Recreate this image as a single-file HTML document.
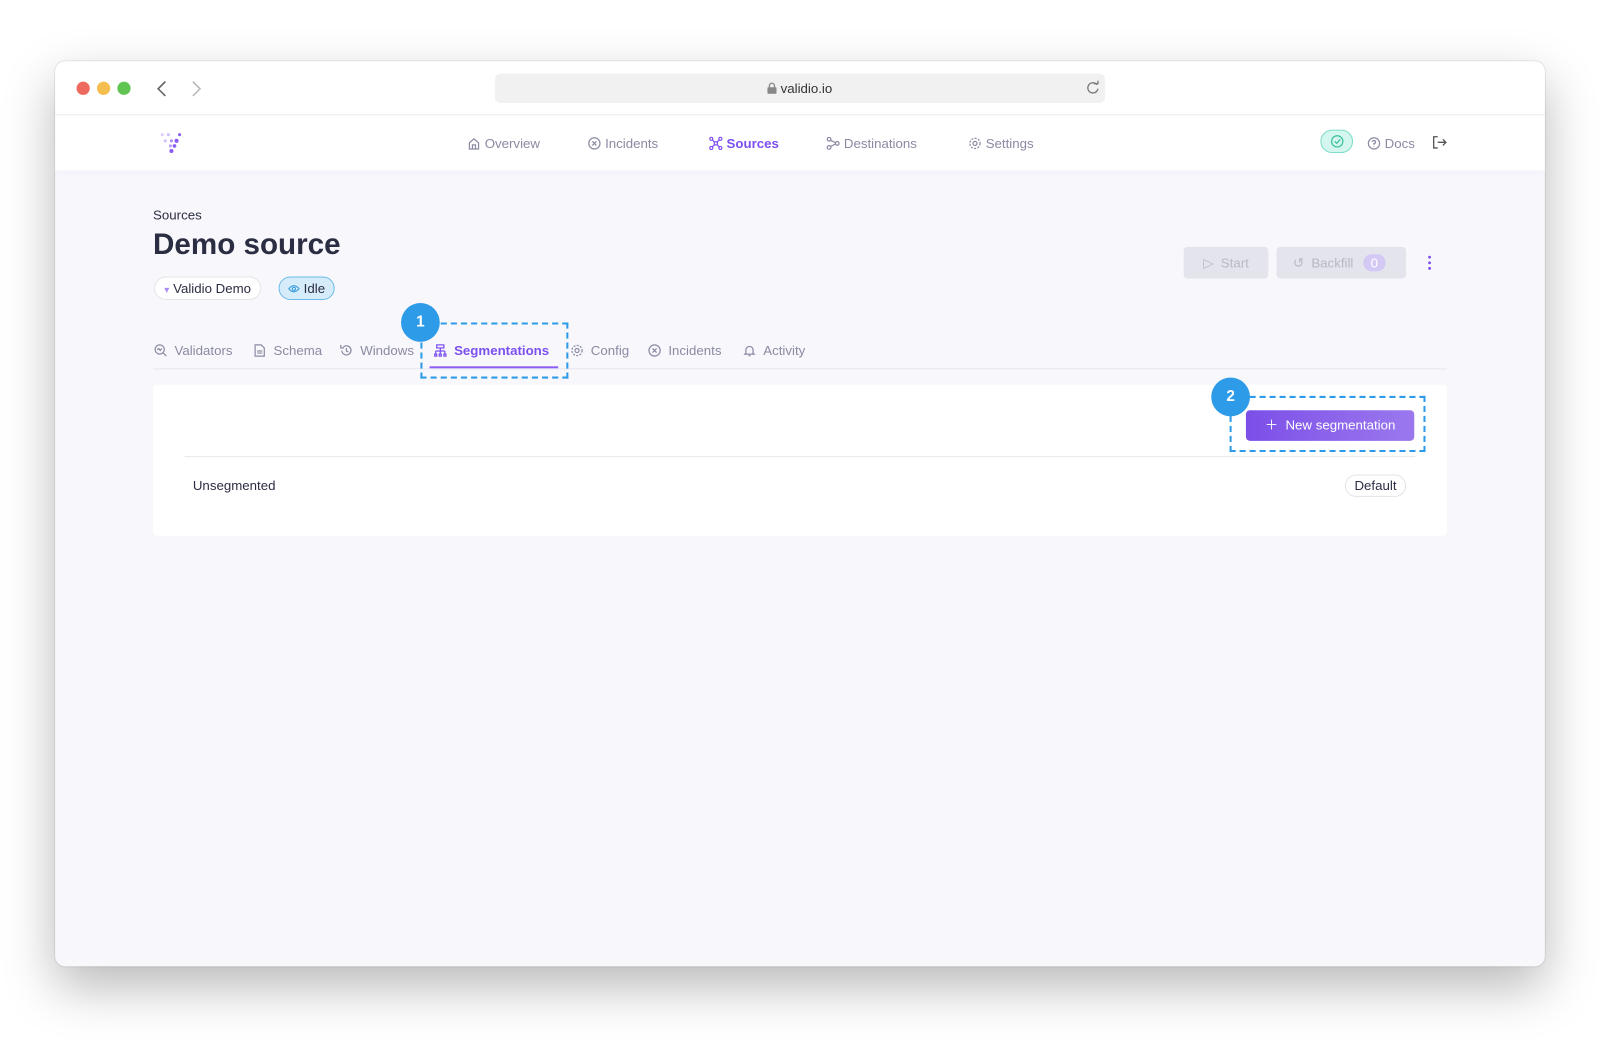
<!DOCTYPE html>
<html><head><meta charset="utf-8"><style>
*{box-sizing:border-box;margin:0;padding:0}
body{width:1600px;height:1040px;background:#fff;font-family:"Liberation Sans",sans-serif;position:relative;overflow:hidden}
.wrap{position:absolute;left:0;top:0;width:1568px;height:1019px;transform:scale(1.0204);transform-origin:0 0}
.win{position:absolute;left:54px;top:60px;width:1460px;height:887px;border-radius:10px;background:#f8f8fc;box-shadow:0 20px 50px rgba(0,0,0,.28),0 0 0 1px rgba(0,0,0,.08);overflow:hidden}
.tb{position:absolute;left:0;top:0;width:100%;height:53px;background:#fff;border-bottom:1px solid #ececec}
.dot{position:absolute;top:20px;width:13px;height:13px;border-radius:50%}
.url{position:absolute;left:431px;top:12px;width:598px;height:29px;background:#f1f1f1;border-radius:6px;text-align:center;font-size:13px;line-height:29px;color:#333}
.nav{position:absolute;left:0;top:53px;width:100%;height:54px;background:#fff;box-shadow:0 2px 8px rgba(120,120,200,.06)}
.ni{position:absolute;top:20px;font-size:13px;color:#8a8aa3;display:flex;align-items:center;gap:4px;line-height:15px}
.abs{position:absolute}
.tab{position:absolute;top:276px;font-size:13px;color:#8a8aa3;display:flex;gap:7px;align-items:center;line-height:15px}
.badge{position:absolute;width:38px;height:38px;border-radius:50%;background:#2e9be8;color:#fff;font-weight:bold;font-size:15px;text-align:center;line-height:38px}
.dash{position:absolute;border:2px dashed #2e9be8}
svg.i{width:13px;height:13px;fill:none;stroke:currentColor;stroke-width:1.2}
</style></head><body>
<div class="wrap">
<div class="win">
 <div class="tb">
  <div class="dot" style="left:21px;background:#ee6a5e"></div>
  <div class="dot" style="left:41px;background:#f5be4f"></div>
  <div class="dot" style="left:61px;background:#61c554"></div>
  <svg class="abs" style="left:98px;top:18px" width="14" height="18"><path d="M10 2L3 9l7 7" stroke="#666" stroke-width="1.6" fill="none"/></svg>
  <svg class="abs" style="left:131px;top:18px" width="14" height="18"><path d="M4 2l7 7-7 7" stroke="#bbb" stroke-width="1.6" fill="none"/></svg>
  <div class="url"><svg width="9" height="11" style="vertical-align:-1px"><rect x="0" y="4.5" width="9" height="6.5" rx="1" fill="#888"/><path d="M2 5V3a2.5 2.5 0 0 1 5 0v2" stroke="#888" stroke-width="1.3" fill="none"/></svg> validio.io</div>
  <svg class="abs" style="left:1010px;top:19px" width="14" height="14"><path d="M11 4A5 5 0 1 0 12 8" stroke="#777" stroke-width="1.3" fill="none"/><path d="M8 3h4V0" stroke="#777" stroke-width="1.3" fill="none"/></svg>
 </div>
 <div class="nav">
  <svg class="abs" style="left:102px;top:16px" width="24" height="22"><g fill="#8b5cf6"><circle cx="3" cy="3" r="1.5" opacity=".3"/><circle cx="9" cy="3" r="1.5" opacity=".4"/><circle cx="20" cy="3" r="1.5"/><circle cx="6" cy="9" r="1.5" opacity=".4"/><circle cx="12" cy="9" r="1.5" opacity=".7"/><circle cx="17" cy="9" r="2"/><circle cx="11" cy="14" r="1.5" opacity=".6"/><circle cx="15" cy="14" r="1.8"/><circle cx="12" cy="19" r="2"/></g></svg>
  <div class="ni" style="left:404px"><svg class="i" viewBox="0 0 13 13"><path d="M2 6L6.5 2 11 6v6H2z M5 12V8h3v4"/></svg>Overview</div>
  <div class="ni" style="left:522px"><svg class="i" viewBox="0 0 13 13"><circle cx="6.5" cy="6.5" r="5.5"/><path d="M4.5 4.5l4 4M8.5 4.5l-4 4"/></svg>Incidents</div>
  <div class="ni" style="left:641px;color:#7c4ff0;font-weight:bold"><svg class="i" viewBox="0 0 13 13"><circle cx="2" cy="2" r="1.5"/><circle cx="11" cy="2" r="1.5"/><circle cx="2" cy="11" r="1.5"/><circle cx="11" cy="11" r="1.5"/><path d="M3 3l2 2M10 3L8 5M3 10l2-2M10 10L8 8"/><rect x="5" y="5" width="3" height="3"/></svg>Sources</div>
  <div class="ni" style="left:756px"><svg class="i" viewBox="0 0 13 13"><circle cx="2.5" cy="2.5" r="1.8"/><circle cx="2.5" cy="10.5" r="1.8"/><circle cx="10.5" cy="6.5" r="1.8"/><path d="M4 3.5l5 2.5M4 9.5l5-2.5"/></svg>Destinations</div>
  <div class="ni" style="left:895px"><svg class="i" viewBox="0 0 13 13"><circle cx="6.5" cy="6.5" r="2"/><circle cx="6.5" cy="6.5" r="5" stroke-dasharray="2 1.3"/></svg>Settings</div>
  <div class="abs" style="left:1240px;top:14px;width:32px;height:23px;border-radius:12px;background:#d3f7ef;border:1px solid #7fdcc7"><svg class="abs" style="left:9px;top:4px" width="13" height="13" viewBox="0 0 13 13" fill="none" stroke="#3cbf9e" stroke-width="1.2"><circle cx="6.5" cy="6.5" r="5.5"/><path d="M4 6.5l2 2 3.5-4"/></svg></div>
  <div class="ni" style="left:1286px"><svg class="i" viewBox="0 0 13 13"><circle cx="6.5" cy="6.5" r="5.5"/><path d="M5 5a1.5 1.5 0 1 1 1.5 1.7V8M6.5 9.5v.5"/></svg>Docs</div>
  <svg class="abs" style="left:1350px;top:20px" width="14" height="13" viewBox="0 0 14 13" fill="none" stroke="#555" stroke-width="1.3"><path d="M5 1H1v11h4M5 6.5h8M10 3.5l3 3-3 3"/></svg>
 </div>
 <div class="abs" style="left:96px;top:143px;font-size:13px;color:#2b2d42">Sources</div>
 <div class="abs" style="left:96px;top:164px;font-size:29px;font-weight:bold;color:#2b2d42">Demo source</div>
 <div class="abs" style="left:97px;top:211px;height:23px;padding:0 9px;border:1px solid #e3e3ea;border-radius:12px;background:#fff;font-size:13px;line-height:21px;color:#2b2d42"><span style="color:#a78bfa;font-size:10px">▾</span> Validio Demo</div>
 <div class="abs" style="left:219px;top:211px;height:23px;padding:0 8px;border:1px solid #6bbbe8;border-radius:12px;background:#d6ecfb;font-size:13px;line-height:21px;color:#2b2d42"><svg width="12" height="10" style="vertical-align:-1px" viewBox="0 0 12 10" fill="none" stroke="#3b9fdc" stroke-width="1.1"><path d="M1 5Q6 -1 11 5Q6 11 1 5z"/><circle cx="6" cy="5" r="1.6"/></svg> Idle</div>
 <div class="abs" style="left:1106px;top:182px;width:83px;height:31px;border-radius:4px;background:#e4e4ec;color:#b8b8c6;font-size:13px;line-height:31px;text-align:center">▷ &nbsp;Start</div>
 <div class="abs" style="left:1197px;top:182px;width:127px;height:31px;border-radius:4px;background:#e4e4ec;color:#b8b8c6;font-size:13px;line-height:31px;padding-left:16px">↺ &nbsp;Backfill <span style="display:inline-block;width:22px;height:17px;border-radius:9px;background:#d4c9f5;color:#fff;text-align:center;line-height:17px;margin-left:6px">0</span></div>
 <svg class="abs" style="left:1345px;top:190px" width="4" height="15"><g fill="#7c4ff0"><circle cx="2" cy="2" r="1.4"/><circle cx="2" cy="7.5" r="1.4"/><circle cx="2" cy="13" r="1.4"/></g></svg>
 <div class="tab" style="left:97px"><svg class="i" viewBox="0 0 13 13"><circle cx="5.5" cy="5.5" r="4.5"/><path d="M9 9l3 3M3 6l1.5-1.5 1.5 2 1.5-2"/></svg>Validators</div>
 <div class="tab" style="left:194px"><svg class="i" viewBox="0 0 13 13"><path d="M2 1h6l3 3v8H2z M4 7h5M4 9h5"/></svg>Schema</div>
 <div class="tab" style="left:279px"><svg class="i" viewBox="0 0 13 13"><path d="M2 6.5A4.5 4.5 0 1 0 3.5 3M1 1v3h3M6.5 4v3l2 1"/></svg>Windows</div>
 <div class="tab" style="left:371px;color:#7c4ff0;font-weight:bold"><svg class="i" viewBox="0 0 13 13"><rect x="3" y="1" width="7" height="3"/><path d="M6.5 4v3M2 7h9M2 7v3M6.5 7v3M11 7v3"/><rect x="1" y="10" width="2" height="2"/><rect x="5.5" y="10" width="2" height="2"/><rect x="10" y="10" width="2" height="2"/></svg>Segmentations</div>
 <div class="abs" style="left:367px;top:299px;width:126px;height:2px;background:#8b5cf6"></div>
 <div class="tab" style="left:505px"><svg class="i" viewBox="0 0 13 13"><circle cx="6.5" cy="6.5" r="2"/><circle cx="6.5" cy="6.5" r="5" stroke-dasharray="2 1.3"/></svg>Config</div>
 <div class="tab" style="left:581px"><svg class="i" viewBox="0 0 13 13"><circle cx="6.5" cy="6.5" r="5.5"/><path d="M4.5 4.5l4 4M8.5 4.5l-4 4"/></svg>Incidents</div>
 <div class="tab" style="left:674px"><svg class="i" viewBox="0 0 13 13"><path d="M3 9V6a3.5 3.5 0 0 1 7 0v3l1 1H2z M5.5 11.5h2"/></svg>Activity</div>
 <div class="abs" style="left:96px;top:301px;width:1268px;height:1px;background:#e6e6ee"></div>
 <div class="abs" style="left:96px;top:317px;width:1268px;height:148px;background:#fff;border-radius:4px"></div>
 <div class="abs" style="left:127px;top:387px;width:1206px;height:1px;background:#e6e6ee"></div>
 <div class="abs" style="left:1167px;top:342px;width:165px;height:30px;border-radius:4px;background:linear-gradient(90deg,#7c4fe8,#9b78ee);color:#fff;font-size:13px;line-height:30px;text-align:center">＋&nbsp; New segmentation</div>
 <div class="abs" style="left:135px;top:408px;font-size:13px;color:#2b2d42">Unsegmented</div>
 <div class="abs" style="left:1264px;top:405px;width:60px;height:22px;border:1px solid #e3e3ea;border-radius:11px;font-size:13px;line-height:20px;text-align:center;color:#2b2d42">Default</div>
 <div class="dash" style="left:358px;top:256px;width:145px;height:55px"></div>
 <div class="badge" style="left:339px;top:237px">1</div>
 <div class="dash" style="left:1151px;top:328px;width:192px;height:55px"></div>
 <div class="badge" style="left:1133px;top:310px">2</div>
</div>
</div>
</body></html>
